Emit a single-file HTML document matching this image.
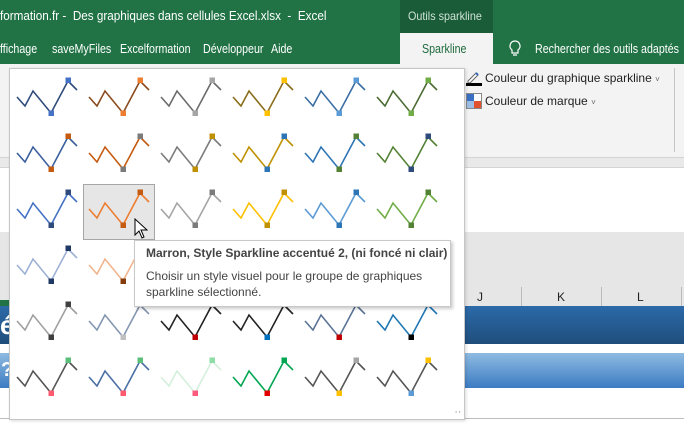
<!DOCTYPE html>
<html><head><meta charset="utf-8"><style>
body{margin:0;width:684px;height:433px;overflow:hidden;position:relative;font-family:"Liberation Sans",sans-serif;background:#fff}
.abs{position:absolute}
.t{color:#fff;font-size:13px;white-space:nowrap;transform-origin:0 0}
.tab{transform:scaleX(0.82)}
</style></head><body>
<div class="abs" style="left:0;top:0;width:684px;height:64px;background:#217346"></div>
<div class="abs" style="left:400px;top:0;width:93px;height:33px;background:#1a5c38"></div>
<div class="abs t" style="left:0;top:8px;transform:scaleX(0.9)">formation.fr -&nbsp; Des graphiques dans cellules Excel.xlsx&nbsp; -&nbsp; Excel</div>
<div class="abs t" style="left:408px;top:9px;font-size:12px;color:#cfe3d6;transform:scaleX(0.9)">Outils sparkline</div>
<div class="abs" style="left:400px;top:33px;width:93px;height:31px;background:#f3f3f3"></div>
<div class="abs t tab" style="left:0;top:41px">ffichage</div>
<div class="abs t tab" style="left:52px;top:41px">saveMyFiles</div>
<div class="abs t tab" style="left:120px;top:41px">Excelformation</div>
<div class="abs t tab" style="left:203px;top:41px">Développeur</div>
<div class="abs t tab" style="left:271px;top:41px">Aide</div>
<div class="abs t tab" style="left:422px;top:41px;color:#1e6b3e">Sparkline</div>
<svg class="abs" style="left:508px;top:40px" width="14" height="18"><path d="M7 1a5 5 0 0 0-3 9v3h6v-3a5 5 0 0 0-3-9zM5 15h4" stroke="#fff" fill="none" stroke-width="1.2"/></svg>
<div class="abs t tab" style="left:535px;top:41px">Rechercher des outils adaptés</div>
<!-- ribbon -->
<div class="abs" style="left:0;top:64px;width:684px;height:93px;background:#f3f3f3;border-bottom:1px solid #d4d4d4"></div>
<div class="abs" style="left:674px;top:68px;width:1px;height:84px;background:#c6c6c6"></div>
<div class="abs" style="left:0;top:158px;width:684px;height:9px;background:#e9e9e9;border-bottom:1px solid #d4d4d4"></div>
<svg class="abs" style="left:466px;top:70px" width="16" height="16"><path d="M2 11l8-8 2 2-8 8H2z" fill="#fff" stroke="#666"/><path d="M10 3l2 2" stroke="#3a6fc4" stroke-width="2"/><rect x="0" y="13" width="16" height="3" fill="#000"/></svg>
<div class="abs" style="left:485px;top:71px;font-size:12px;color:#222">Couleur du graphique sparkline <span style="font-size:8px;color:#666">˅</span></div>
<svg class="abs" style="left:466px;top:93px" width="16" height="16"><rect x="0" y="0" width="8" height="8" fill="#3a6fc4"/><rect x="8" y="0" width="8" height="8" fill="#fff"/><rect x="0" y="8" width="8" height="8" fill="#9dbde3"/><rect x="8" y="8" width="8" height="8" fill="#e0522e"/><rect x="0.5" y="0.5" width="15" height="15" fill="none" stroke="#888"/></svg>
<div class="abs" style="left:485px;top:94px;font-size:12px;color:#222">Couleur de marque <span style="font-size:8px;color:#666">˅</span></div>
<!-- sheet -->
<div class="abs" style="left:0;top:232px;width:684px;height:74px;background:#e6e6e6"></div>
<div class="abs" style="left:0;top:300px;width:10px;height:6px;background:#217346"></div>
<div class="abs" style="left:521px;top:287px;width:1px;height:19px;background:#bbb"></div>
<div class="abs" style="left:601px;top:287px;width:1px;height:19px;background:#bbb"></div>
<div class="abs" style="left:681px;top:287px;width:1px;height:19px;background:#bbb"></div>
<div class="abs" style="left:477px;top:290px;font-size:12px;color:#222">J</div>
<div class="abs" style="left:557px;top:290px;font-size:12px;color:#222">K</div>
<div class="abs" style="left:637px;top:290px;font-size:12px;color:#222">L</div>
<div class="abs" style="left:0;top:306px;width:684px;height:38px;background:linear-gradient(#2c6aa9,#1f4e7c)"></div>
<div class="abs" style="left:0;top:353px;width:684px;height:35px;background:linear-gradient(#8fbbe2,#3b7bc2)"></div>
<div class="abs" style="left:0;top:310px;font-size:26px;color:#fff;font-weight:bold">é</div>
<div class="abs" style="left:1px;top:359px;font-size:20px;color:#fff;font-weight:bold">?</div>
<div class="abs" style="left:0;top:418px;width:684px;height:1px;background:#bdbdbd"></div>
<!-- gallery -->
<div class="abs" style="left:9px;top:68px;width:454px;height:350px;background:#fff;border:1px solid #c6c6c6;box-shadow:1px 1px 3px rgba(0,0,0,.15)"></div>
<div class="abs" style="left:83px;top:184px;width:70px;height:54px;background:#e6e6e6;border:1px solid #a6a6a6"></div>
<svg id="g" class="abs" style="left:0;top:0" width="684" height="433"></svg>
<div class="abs" style="left:452px;top:406px;font-size:8px;color:#999">⠠⠄</div>
<!-- tooltip -->
<div class="abs" style="left:134px;top:240px;width:315px;height:65px;background:#fff;border:1px solid #c8c8c8;box-shadow:2px 2px 3px rgba(0,0,0,.2)"></div>
<div class="abs" style="left:146px;top:246px;font-size:12px;font-weight:bold;color:#444">Marron, Style Sparkline accentué 2, (ni foncé ni clair)</div>
<div class="abs" style="left:146px;top:268px;font-size:12px;color:#444;line-height:16px">Choisir un style visuel pour le groupe de graphiques<br>sparkline sélectionné.</div>
<svg class="abs" style="left:134px;top:218px" width="14" height="22"><path d="M1 1v16l4-4 3 7 2-1-3-7h6z" fill="#fff" stroke="#000" stroke-width="1"/></svg>
<script>
var A=['#4472c4','#ed7d31','#a5a5a5','#ffc000','#5b9bd5','#70ad47'];
var D=['#2f4b7c','#8b4a1d','#6b6b6b','#8a6d1a','#3a6ea5','#4c6b33'];
var DM=['#2f4b7c','#c55a11','#7b7b7b','#bf9000','#2e75b6','#548235'];
var L=['#9db0d6','#f2b48d','#c9c9c9','#ffd966','#9dc3e6','#a9d18e'];
var DK=['#1f3864','#843c0c','#3a3a3a','#7f6000','#1f4e79','#385723'];
var rows=[];
rows.push(A.map((c,i)=>[D[i],c,c]));
rows.push(A.map((c,i)=>[c=='#4472c4'?'#3a5f9e':DM[i],DM[(i+1)%6],DM[(i+1)%6]]));
rows.push(A.map((c,i)=>[c,DM[i],DM[i]]));
rows.push(A.map((c,i)=>[L[i],DK[i],DK[i]]));
rows.push([['#a0a0a0','#404040','#404040'],['#8496b0','#c0c0c0','#c0c0c0'],['#222','#c00000','#c00000'],['#222','#0070c0','#0070c0'],['#5a7396','#c00000','#c00000'],['#1f77b4','#000','#000']]);
rows.push([['#555','#5bbf7a','#ff5a6e'],['#4a6fa5','#5bbf7a','#ff5a6e'],['#d4efdc','#8fdca6','#ff5a7e'],['#00a651','#00a651','#e00000'],['#555','#a5a5a5','#ffc000'],['#555','#ffc000','#5b9bd5']]);
var s='';
rows.forEach(function(r,ri){r.forEach(function(c,ci){
 var x=17+ci*72,y=78+ri*56;
 var p=[[0,19],[8,28],[16,13],[34,35],[51,3],[60,12]].map(function(q){return (x+q[0])+','+(y+q[1]);}).join(' ');
 s+='<polyline points="'+p+'" fill="none" stroke="'+c[0]+'" stroke-width="1.6"/>';
 s+='<rect x="'+(x+48.5)+'" y="'+(y-0.5)+'" width="5.5" height="5.5" fill="'+c[1]+'"/>';
 s+='<rect x="'+(x+31.5)+'" y="'+(y+32.5)+'" width="5.5" height="5.5" fill="'+c[2]+'"/>';
});});
document.getElementById('g').innerHTML=s;
</script>
</body></html>
